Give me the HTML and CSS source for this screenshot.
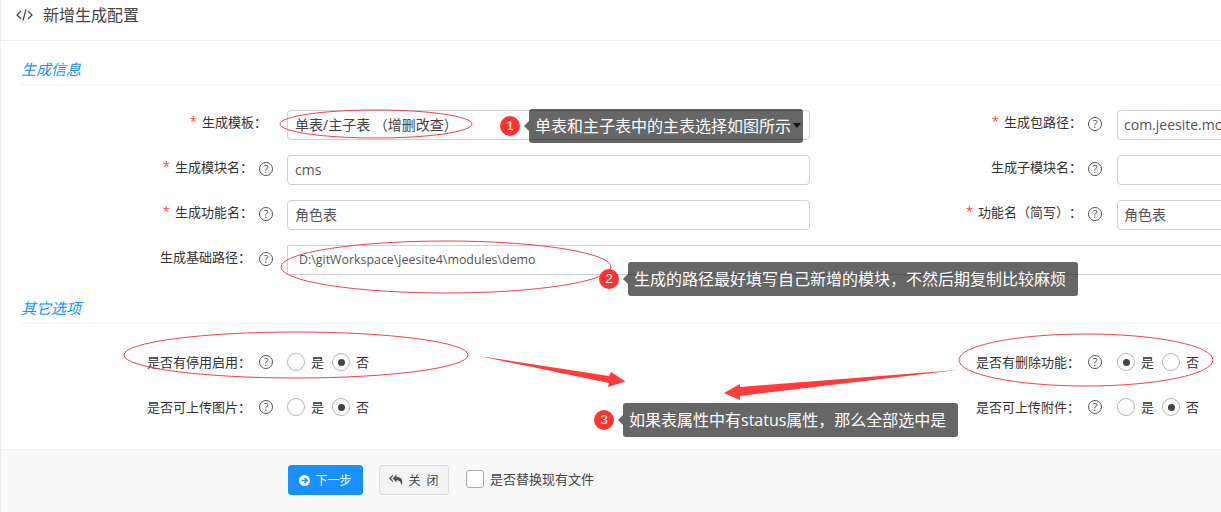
FILE: index.html
```html
<!DOCTYPE html>
<html lang="zh-CN">
<head>
    <meta charset="UTF-8">
    <meta name="viewport" content="width=device-width, initial-scale=1.0">
    <title>新增生成配置</title>
    <link rel="stylesheet" href="styles.css">
</head>
<body>
    <div class="page">
        <div class="box-header">
            <svg class="code-icon" width="17" height="14" viewBox="0 0 17 14">
                <path d="M5 3 L1 7 L5 11 M12 3 L16 7 L12 11 M10 1.5 L7 12.5" fill="none" stroke="#444" stroke-width="1.2"/>
            </svg>
            <span>新增生成配置</span>
        </div>

        <div class="box-body">
            <h4 class="legend">生成信息</h4>
            <div class="form-grid">
                <div class="label label-plain"><i class="req">*</i>生成模板：</div>
                <div class="input select">单表/主子表 （增删改查）<b class="caret"></b></div>
                <div class="label label-r"><i class="req">*</i>生成包路径：<span class="help">?</span></div>
                <div class="input">com.jeesite.modules</div>

                <div class="label"><i class="req">*</i>生成模块名：<span class="help">?</span></div>
                <div class="input">cms</div>
                <div class="label label-r">生成子模块名：<span class="help">?</span></div>
                <div class="input"></div>

                <div class="label"><i class="req">*</i>生成功能名：<span class="help">?</span></div>
                <div class="input">角色表</div>
                <div class="label label-r"><i class="req">*</i>功能名（简写）：<span class="help">?</span></div>
                <div class="input">角色表</div>

                <div class="label label-wide">生成基础路径：<span class="help">?</span></div>
                <div class="input input-path">D:\gitWorkspace\jeesite4\modules\demo</div>
            </div>

            <h4 class="legend legend-other">其它选项</h4>
            <div class="form-grid">
                <div class="label label-radio">是否有停用启用：<span class="help">?</span></div>
                <div class="radios">
                    <span class="radio"></span><span class="radio-text">是</span>
                    <span class="radio checked"></span><span class="radio-text">否</span>
                </div>
                <div class="label label-radio label-r">是否有删除功能：<span class="help">?</span></div>
                <div class="radios">
                    <span class="radio checked"></span><span class="radio-text">是</span>
                    <span class="radio"></span><span class="radio-text">否</span>
                </div>

                <div class="label label-radio">是否可上传图片：<span class="help">?</span></div>
                <div class="radios">
                    <span class="radio"></span><span class="radio-text">是</span>
                    <span class="radio checked"></span><span class="radio-text">否</span>
                </div>
                <div class="label label-radio label-r">是否可上传附件：<span class="help">?</span></div>
                <div class="radios">
                    <span class="radio"></span><span class="radio-text">是</span>
                    <span class="radio checked"></span><span class="radio-text">否</span>
                </div>
            </div>
        </div>

        <div class="box-footer">
            <button class="btn btn-primary">
                <svg width="11" height="11" viewBox="0 0 11 11">
                    <circle cx="5.5" cy="5.5" r="5.5" fill="#fff"/>
                    <path d="M2.5 5.5 H7.5 M5.5 3 L8 5.5 L5.5 8" fill="none" stroke="#1890ff" stroke-width="1.6"/>
                </svg>
                下一步
            </button>
            <button class="btn btn-default">
                <svg width="14" height="12" viewBox="0 0 14 12">
                    <path d="M4 0.5 L0 4.5 L4 8.5 V7 L2 4.5 L4 2 Z" fill="#555"/>
                    <path d="M7.5 0.5 L3.5 4.5 L7.5 8.5 V6.2 C10.5 6.2 12 8 12.5 11.5 C14.5 6.5 12.5 3 7.5 2.8 Z" fill="#555"/>
                </svg>
                关 闭
            </button>
            <label class="check">
                <span class="check-box"></span>是否替换现有文件
            </label>
        </div>

        <!-- 截图上的标注 -->
        <svg class="marks" width="1221" height="512" viewBox="0 0 1221 512">
            <g fill="none" stroke="#f0434d" stroke-width="1">
                <ellipse cx="376" cy="124" rx="96" ry="14"/>
                <ellipse cx="446" cy="267" rx="165" ry="26"/>
                <ellipse cx="296" cy="355" rx="172" ry="23"/>
                <ellipse cx="1086" cy="360" rx="127" ry="26"/>
            </g>
            <g fill="#ff3b3b">
                <polygon points="479,356 609,376 611,372 625.5,381.5 608,387 609,383"/>
                <polygon points="957,370 740,387 740,384 724,393 740,400 740,396"/>
            </g>
        </svg>

        <div class="note note-1"><span class="badge">1</span><span class="tip">单表和主子表中的主表选择如图所示</span></div>
        <div class="note note-2"><span class="badge">2</span><span class="tip">生成的路径最好填写自己新增的模块，不然后期复制比较麻烦</span></div>
        <div class="note note-3"><span class="badge">3</span><span class="tip">如果表属性中有status属性，那么全部选中是</span></div>
    </div>
</body>
</html>
```

FILE: styles.css
```css
* {
    box-sizing: border-box;
}
html, body {
    margin: 0;
    height: 100%;
    overflow: hidden;
}
body {
    font-family: "Open Sans", "Noto Sans CJK SC", sans-serif;
    font-size: 13px;
    color: #333;
    background: #fff;
    text-spacing-trim: space-all;
}
.page {
    position: relative;
    display: flex;
    flex-direction: column;
    width: 1221px;
    height: 512px;
    overflow: hidden;
    border-left: 1px solid #eee;
}
.box-header {
    display: flex;
    align-items: center;
    flex: none;
    height: 41px;
    padding: 0 0 10px 15px;
    font-size: 16px;
    line-height: 22px;
    color: #444;
    border-bottom: 1px solid #eee;
}
.code-icon {
    margin-right: 10px;
}
.box-body {
    flex: 1;
    padding-left: 20px;
}
.legend {
    margin: 16px 0 25px;
    padding-bottom: 3px;
    font-size: 15px;
    font-weight: normal;
    font-style: italic;
    line-height: 24px;
    color: #1890ff;
    border-bottom: 1px solid #eee;
}
.legend-other {
    margin: 21px 0 23px;
}
.form-grid {
    display: grid;
    grid-template-columns: 252px 523px 279px 523px;
    grid-auto-rows: 30px;
    column-gap: 14px;
    row-gap: 15px;
}
.label {
    display: flex;
    align-items: center;
    justify-content: flex-end;
    padding-bottom: 8px;
    white-space: nowrap;
}
.label-plain {
    padding-right: 6px;
}
.label-r {
    padding-right: 1px;
}
.label-radio {
    padding-bottom: 2px;
}
.req {
    margin-right: 5px;
    font-style: normal;
    color: #f5483b;
}
.help {
    display: inline-block;
    width: 14px;
    height: 14px;
    margin-top: 6px;
    margin-left: 6px;
    font-size: 11px;
    line-height: 12px;
    text-align: center;
    color: #555;
    border: 1px solid #555;
    border-radius: 50%;
}
.label-radio .help,
.label-wide .help {
    margin-left: 8px;
}
.label-radio .help {
    margin-top: 2px;
}
.input {
    position: relative;
    height: 30px;
    padding: 0 7px;
    font-size: 14px;
    line-height: 28px;
    color: #555;
    background: #fff;
    border: 1px solid #ccd0d9;
    border-radius: 4px;
    white-space: nowrap;
    overflow: hidden;
}
.label-r + .input {
    padding-left: 6px;
}
.select {
    color: #444;
}
.input-path {
    grid-column: 2 / 5;
    padding-left: 11px;
    font-size: 12.4px;
    border-radius: 2px;
}
.caret {
    position: absolute;
    top: 12px;
    right: 8px;
    border-top: 5px solid #333;
    border-left: 4px solid transparent;
    border-right: 4px solid transparent;
}
.radios {
    display: flex;
    align-items: center;
    height: 30px;
}
.radio {
    display: flex;
    align-items: center;
    justify-content: center;
    width: 18px;
    height: 18px;
    border: 1px solid #b5b5b5;
    border-radius: 50%;
}
.radio.checked::after {
    content: "";
    width: 7px;
    height: 7px;
    background: #444;
    border-radius: 50%;
}
.radio-text {
    width: 27px;
    padding: 0 0 1px 6px;
}
.box-footer {
    display: flex;
    align-items: flex-start;
    flex: none;
    height: 63px;
    padding: 15px 0 0 287px;
    background: #f9f9f9;
    border-top: 1px solid #f0f0f0;
}
.btn {
    display: flex;
    align-items: center;
    justify-content: center;
    height: 30px;
    padding: 0;
    font-family: inherit;
    font-size: 12px;
    border-radius: 3px;
}
.btn-primary {
    gap: 5px;
    width: 75px;
    color: #fff;
    background: #1890ff;
    border: 1px solid #1890ff;
}
.btn-default {
    gap: 5px;
    width: 70px;
    margin-left: 16px;
    color: #444;
    background: #f3f3f3;
    border: 1px solid #ddd;
    word-spacing: 3px;
}
.check {
    display: flex;
    align-items: center;
    height: 27px;
    margin-left: 17px;
    color: #444;
}
.check-box {
    width: 18px;
    height: 18px;
    margin-right: 6px;
    background: #fff;
    border: 1px solid #aaa;
    border-radius: 3px;
}

/* 标注 */
.marks {
    position: absolute;
    top: 0;
    left: -1px;
    pointer-events: none;
}
.note {
    position: absolute;
    display: flex;
    align-items: center;
    height: 34px;
    white-space: nowrap;
}
.note-1 {
    left: 499px;
    top: 109px;
}
.note-2 {
    left: 598px;
    top: 262px;
}
.note-3 {
    left: 593px;
    top: 403px;
}
.badge {
    width: 20px;
    height: 20px;
    margin-right: 9px;
    font-family: "Liberation Sans", sans-serif;
    font-size: 13px;
    line-height: 20px;
    text-align: center;
    color: #fff;
    background: #ff3333;
    border-radius: 50%;
}
.tip {
    position: relative;
    height: 34px;
    padding: 0 12px 0 6px;
    font-size: 16px;
    line-height: 34px;
    color: #fff;
    background: rgba(0, 0, 0, 0.6);
    border-radius: 3px;
}
.tip::before {
    content: "";
    position: absolute;
    top: 12px;
    left: -5px;
    border-top: 5px solid transparent;
    border-bottom: 5px solid transparent;
    border-right: 5px solid rgba(0, 0, 0, 0.6);
}
```
